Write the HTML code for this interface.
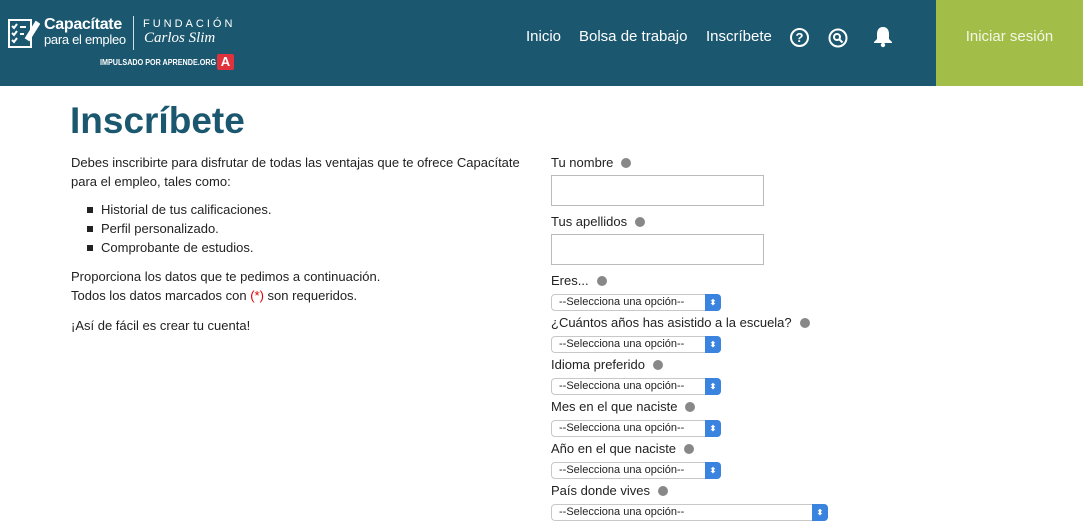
<!DOCTYPE html>
<html><head><meta charset="utf-8"><style>
*{margin:0;padding:0;box-sizing:border-box}
body{width:1083px;height:529px;overflow:hidden;background:#fff;font-family:"Liberation Sans",Arial,sans-serif;color:#222;position:relative}
.hdr{position:absolute;left:0;top:0;width:1083px;height:86px;background:#1b5870}
.login{position:absolute;left:936px;top:0;width:147px;height:86px;background:#a2bd48;color:#f3f7e6;font-size:15px;text-align:center;line-height:74px}
.nav{position:absolute;top:28px;color:#fff;font-size:15px}
.abs{position:absolute}
h1{position:absolute;left:70px;top:100px;font-size:37px;color:#1b5870;font-weight:bold}
.t{position:absolute;font-size:13px;line-height:19px;color:#222}
ul{list-style:none}
li{position:relative;padding-left:30px;font-size:13px;line-height:19px}
li:before{content:"";position:absolute;left:16px;top:7px;width:6px;height:6px;background:#222}
.lbl{position:absolute;left:551px;font-size:13px}
.lbl i{display:inline-block;width:10px;height:10px;border-radius:50%;background:#888;margin-left:8px;vertical-align:-1px}
.inp{position:absolute;left:551px;width:213px;height:31px;border:1px solid #bbb;background:#fff}
.sel{position:absolute;left:551px;width:170px;height:17px;border:1px solid #c8c8c8;border-radius:4px;font-size:11px;line-height:15px;padding-left:7px;color:#222;background:#fff}
.sel b{position:absolute;right:-1px;top:-1px;width:16px;height:17px;background:#3a84e0;border-radius:0 4px 4px 0;color:#fff;font-size:8px;text-align:center;line-height:17px}
</style></head><body>
<div class="hdr"></div>
<svg class="abs" style="left:8px;top:16px" width="32" height="34" viewBox="0 0 32 34" fill="none" stroke="#fff" stroke-width="2"><rect x="1" y="4" width="22" height="27"/><path d="M4 10l2 2 3-4M4 17l2 2 3-4M4 24l2 2 3-4M12 11h6M12 18h4"/><path d="M18 22l10-16 3 2-10 16z" fill="#fff"/></svg>
<div class="abs" style="left:44px;top:16px;color:#fff;font-size:16px;font-weight:bold;letter-spacing:-0.3px">Capacítate</div>
<div class="abs" style="left:44px;top:32px;color:#fff;font-size:13px;letter-spacing:-0.3px">para el empleo</div>
<div class="abs" style="left:133px;top:16px;width:1px;height:34px;background:#cfdfe5"></div>
<div class="abs" style="left:143px;top:18px;color:#fff;font-size:11px;letter-spacing:3px">FUNDACIÓN</div>
<div class="abs" style="left:144px;top:30px;color:#fff;font-size:15px;font-style:italic;font-family:'Liberation Serif',serif">Carlos Slim</div>
<div class="abs" style="left:100px;top:58px;color:#fff;font-size:8px;font-weight:bold;transform:scaleX(0.9);transform-origin:left">IMPULSADO POR APRENDE.ORG</div>
<div class="abs" style="left:217px;top:54px;width:17px;height:16px;background:#e0323c;color:#fff;font-weight:bold;font-size:13px;text-align:center;line-height:16px;border-radius:2px">A</div>
<div class="nav" style="left:526px">Inicio</div>
<div class="nav" style="left:579px">Bolsa de trabajo</div>
<div class="nav" style="left:706px">Inscríbete</div>
<div class="abs" style="left:790px;top:28px;width:19px;height:19px;border:2px solid #fff;border-radius:50%;color:#fff;font-size:13px;font-weight:bold;text-align:center;line-height:15px">?</div>
<svg class="abs" style="left:828px;top:28px" width="20" height="20" viewBox="0 0 20 20" fill="none" stroke="#fff" stroke-width="2"><circle cx="10" cy="10" r="8.5"/><circle cx="9" cy="9" r="3"/><path d="M11 11l3.5 3.5"/></svg>
<svg class="abs" style="left:873px;top:26px" width="20" height="22" viewBox="0 0 20 22" fill="#fff"><path d="M10 1c-4 0-6 3-6 7v5l-3 3v1h18v-1l-3-3V8c0-4-2-7-6-7z"/><circle cx="10" cy="19" r="2.2"/></svg>
<div class="login">Iniciar sesión</div>
<h1>Inscríbete</h1>
<div class="t" style="left:71px;top:153px">Debes inscribirte para disfrutar de todas las ventajas que te ofrece Capacítate<br>para el empleo, tales como:</div>
<ul class="abs" style="left:71px;top:200px"><li>Historial de tus calificaciones.</li><li>Perfil personalizado.</li><li>Comprobante de estudios.</li></ul>
<div class="t" style="left:71px;top:267px">Proporciona los datos que te pedimos a continuación.<br>Todos los datos marcados con <span style="color:#d00">(*)</span> son requeridos.</div>
<div class="t" style="left:71px;top:316px">¡Así de fácil es crear tu cuenta!</div>
<div class="lbl" style="top:155px">Tu nombre<i></i></div>
<div class="inp" style="top:175px"></div>
<div class="lbl" style="top:214px">Tus apellidos<i></i></div>
<div class="inp" style="top:234px"></div>
<div class="lbl" style="top:273px">Eres...<i></i></div>
<div class="sel" style="top:294px">--Selecciona una opción--<b>⬍</b></div>
<div class="lbl" style="top:315px">¿Cuántos años has asistido a la escuela?<i></i></div>
<div class="sel" style="top:336px">--Selecciona una opción--<b>⬍</b></div>
<div class="lbl" style="top:357px">Idioma preferido<i></i></div>
<div class="sel" style="top:378px">--Selecciona una opción--<b>⬍</b></div>
<div class="lbl" style="top:399px">Mes en el que naciste<i></i></div>
<div class="sel" style="top:420px">--Selecciona una opción--<b>⬍</b></div>
<div class="lbl" style="top:441px">Año en el que naciste<i></i></div>
<div class="sel" style="top:462px">--Selecciona una opción--<b>⬍</b></div>
<div class="lbl" style="top:483px">País donde vives<i></i></div>
<div class="sel" style="top:504px;width:277px">--Selecciona una opción--<b>⬍</b></div>
</body></html>
